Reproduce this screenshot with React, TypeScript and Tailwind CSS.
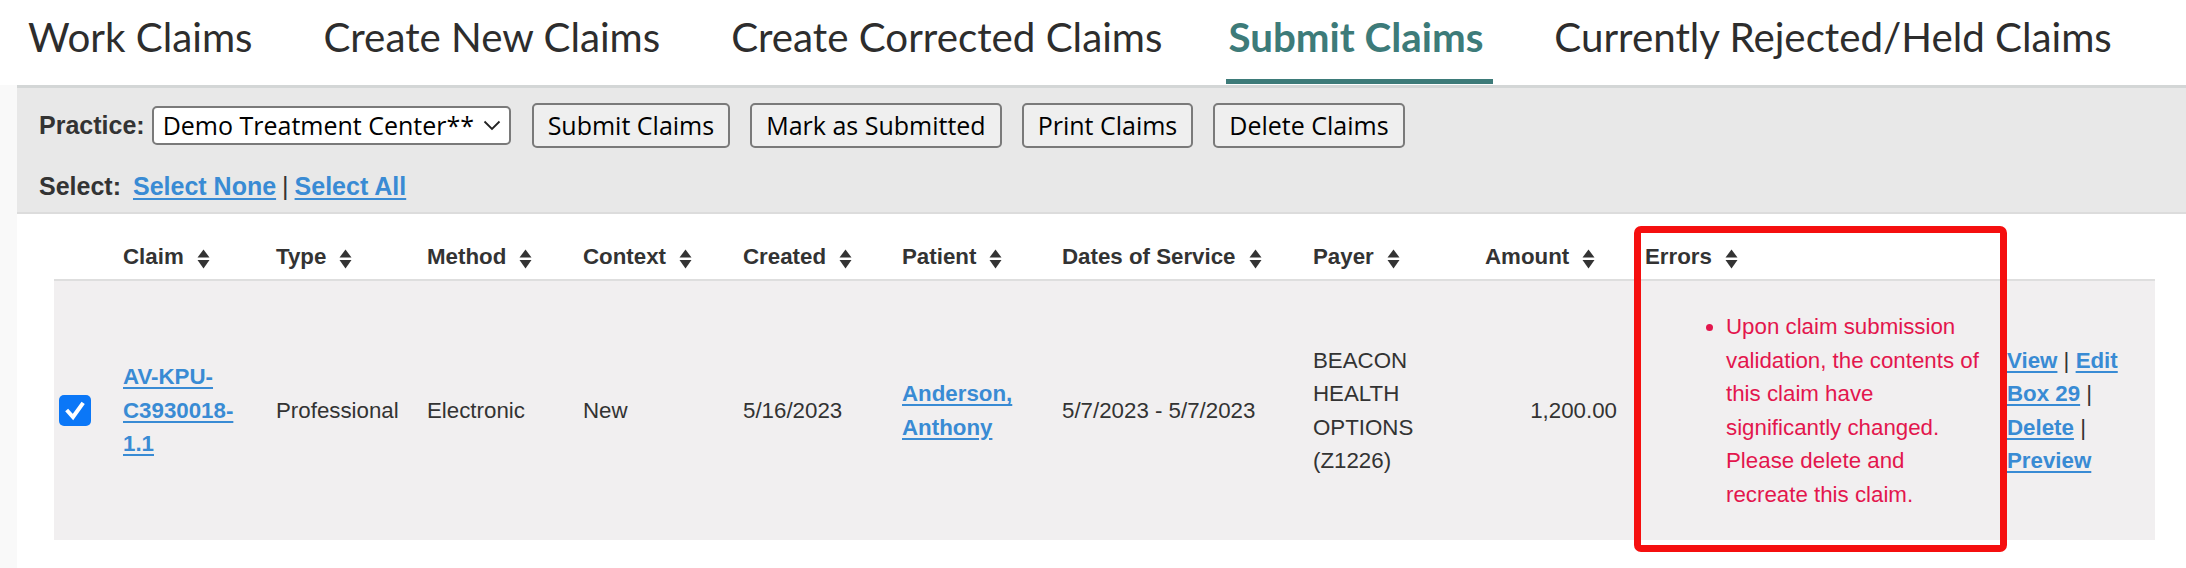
import React from "react";

const tabs = [
  "Work Claims",
  "Create New Claims",
  "Create Corrected Claims",
  "Submit Claims",
  "Currently Rejected/Held Claims",
];

const headers = [
  "Claim",
  "Type",
  "Method",
  "Context",
  "Created",
  "Patient",
  "Dates of Service",
  "Payer",
  "Amount",
  "Errors",
];

function SortIcon() {
  return (
    <svg width="13" height="20" viewBox="0 0 13 20" className="ml-[13px] mt-[5px] shrink-0">
      <path d="M6.5 0.5 L12.5 8.5 H0.5 Z" fill="#333" />
      <path d="M0.5 11 H12.5 L6.5 19.5 Z" fill="#333" />
    </svg>
  );
}

function Checkbox() {
  return (
    <div className="w-[32px] h-[31px] rounded-[5px] bg-[#0b77f7] flex items-center justify-center">
      <svg width="22" height="22" viewBox="0 0 22 22">
        <path d="M4 11.5 L9 17 L18 4.5" stroke="#fff" strokeWidth="4" fill="none" strokeLinecap="square" />
      </svg>
    </div>
  );
}

function ToolButton({ label }: { label: string }) {
  return (
    <button className="h-[45px] px-[14px] bg-[#efefef] border-2 border-[#7a7a7a] rounded-[5px] text-[25px] text-black font-['Open_Sans',sans-serif] leading-none">
      {label}
    </button>
  );
}

const cols = "grid grid-cols-[69px_153px_151px_156px_160px_159px_160px_251px_172px_160px_362px_148px]";

export default function App() {
  return (
    <div className="min-h-screen bg-[#f9f9f9] text-[#333] font-['Liberation_Sans',Arial,sans-serif]">
      {/* Tabs */}
      <nav className="bg-white h-[85px] flex gap-[71px] pl-[28px] font-['Lato',sans-serif]">
        {tabs.map((t) => {
          const active = t === "Submit Claims";
          return (
            <div key={t} className={`relative pt-[13px] ${active ? "-ml-[5px]" : ""}`}>
              <span
                className={`text-[40.3px] leading-[48px] whitespace-nowrap ${
                  active ? "text-[#3d7b79] font-bold" : "text-[#2d2d2d]"
                }`}
              >
                {t}
              </span>
              {active && (
                <div className="absolute left-[-2px] right-[-10px] bottom-[1px] h-[5px] bg-[#3d7b79]" />
              )}
            </div>
          );
        })}
      </nav>

      <div className="ml-[17px] bg-white">
        {/* Toolbar */}
        <div className="bg-[#e8e8e8] border-t-[3px] border-b-2 border-t-[#d3d6d6] border-b-[#dcdcdc] pl-[22px] pt-[15px] pb-[11px]">
          <div className="flex items-center">
            <span className="text-[25px] font-bold text-[#333]">Practice:</span>
            <div className="ml-[7px] w-[359px] h-[39px] bg-white border-2 border-[#7a7a7a] rounded-[5px] flex items-center justify-between pl-[9px] pr-[8px] font-['Open_Sans',sans-serif] text-[25px] text-black">
              <span className="leading-none">Demo Treatment Center**</span>
              <svg width="18" height="11" viewBox="0 0 18 11">
                <path d="M1.5 1.5 L9 9 L16.5 1.5" stroke="#222" strokeWidth="1.8" fill="none" />
              </svg>
            </div>
            <div className="flex items-center gap-[20px] ml-[21px]">
              <ToolButton label="Submit Claims" />
              <ToolButton label="Mark as Submitted" />
              <ToolButton label="Print Claims" />
              <ToolButton label="Delete Claims" />
            </div>
          </div>
          <div className="mt-[23px] flex items-center text-[25px] leading-[30px]">
            <span className="font-bold mr-[12px]">Select:</span>
            <a className="font-bold text-[#398bd4] underline underline-offset-[3px]">Select None</a>
            <span className="mx-[6px]">|</span>
            <a className="font-bold text-[#398bd4] underline underline-offset-[3px]">Select All</a>
          </div>
        </div>

        {/* Table */}
        <div className="relative ml-[37px] w-[2101px] pb-[28px] text-[22.3px]">
          <div className={`${cols} pt-[26px] pb-[6px] border-b-2 border-[#dedede] leading-[33px] font-bold`}>
            <div />
            {headers.map((h) => (
              <div key={h} className="flex items-center whitespace-nowrap">
                <span>{h}</span>
                <SortIcon />
              </div>
            ))}
            <div />
          </div>

          <div className={`${cols} h-[259px] items-center bg-[#f1eff0] leading-[33.5px]`}>
            <div className="pl-[5px]">
              <Checkbox />
            </div>
            <div className="pr-[28px]">
              <a className="font-bold text-[#398bd4] underline underline-offset-[3px]">AV-KPU-C3930018-1.1</a>
            </div>
            <div>Professional</div>
            <div>Electronic</div>
            <div>New</div>
            <div>5/16/2023</div>
            <div className="pr-[28px]">
              <a className="font-bold text-[#398bd4] underline underline-offset-[3px]">Anderson, Anthony</a>
            </div>
            <div>5/7/2023 - 5/7/2023</div>
            <div className="pr-[28px]">BEACON HEALTH OPTIONS (Z1226)</div>
            <div className="pr-[28px] text-right">1,200.00</div>
            <div className="pr-[21px]">
              <ul className="list-disc pl-[81px] text-[#e3164d] marker:text-[#e3164d]">
                <li>Upon claim submission validation, the contents of this claim have significantly changed. Please delete and recreate this claim.</li>
              </ul>
            </div>
            <div className="pr-[26px]">
              <a className="font-bold text-[#398bd4] underline underline-offset-[3px]">View</a> |{" "}
              <a className="font-bold text-[#398bd4] underline underline-offset-[3px]">Edit Box 29</a> |{" "}
              <a className="font-bold text-[#398bd4] underline underline-offset-[3px]">Delete</a> |{" "}
              <a className="font-bold text-[#398bd4] underline underline-offset-[3px]">Preview</a>
            </div>
          </div>

          {/* Annotation box */}
          <div className="absolute left-[1580px] top-[12px] w-[373px] h-[326px] border-[7px] border-[#f50f0f] rounded-[7px] pointer-events-none" />
        </div>
      </div>
    </div>
  );
}
